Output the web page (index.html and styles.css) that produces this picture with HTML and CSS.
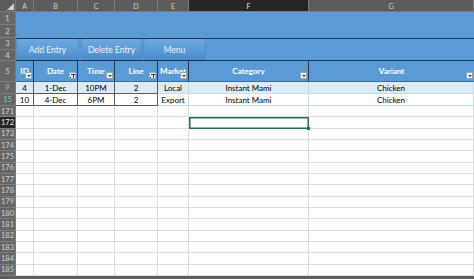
FILE: index.html
```html
<!DOCTYPE html>
<html>
<head>
<meta charset="utf-8">
<link rel="stylesheet" href="styles.css">
</head>
<body>
<div class="sheet">
  <div class="corner"><span class="tri"></span></div>
  <div class="ch">A</div><div class="ch">B</div><div class="ch">C</div><div class="ch">D</div><div class="ch">E</div><div class="ch ch-sel">F</div><div class="ch">G</div>

  <div class="rh">1</div>
  <div class="banner"></div>
  <div class="rh">2</div>
  <div class="rh">3</div>
  <div class="band">
    <div class="btn btn-add">Add Entry</div>
    <div class="btn btn-del">Delete Entry</div>
    <div class="btn btn-menu">Menu</div>
  </div>
  <div class="rh">4</div>

  <div class="rh">5</div>
  <div class="th">ID<span class="fb dd"></span></div>
  <div class="th">Date<span class="fb ft"></span></div>
  <div class="th">Time<span class="fb dd"></span></div>
  <div class="th">Line<span class="fb ft"></span></div>
  <div class="th">Market<span class="fb dd"></span></div>
  <div class="th">Category<span class="fb dd"></span></div>
  <div class="th th-last">Variant<span class="fb dd"></span></div>

  <div class="rh rh-f">9</div>
  <div class="td tb alt">4</div><div class="td tb alt">1-Dec</div><div class="td tb alt">10PM</div><div class="td tb alt">2</div>
  <div class="td tl alt">Local</div><div class="td tl alt">Instant Mami</div><div class="td tl alt">Chicken</div>

  <div class="rh rh-f">15</div>
  <div class="td tb">10</div><div class="td tb">4-Dec</div><div class="td tb">6PM</div><div class="td tb">2</div>
  <div class="td tl">Export</div><div class="td tl">Instant Mami</div><div class="td tl">Chicken</div>

  <div class="rh">171</div><div class="c"></div><div class="c"></div><div class="c"></div><div class="c"></div><div class="c"></div><div class="c"></div><div class="c"></div>
  <div class="rh rh-sel">172</div><div class="c"></div><div class="c"></div><div class="c"></div><div class="c"></div><div class="c"></div><div class="c c-sel"></div><div class="c"></div>
  <div class="rh">173</div><div class="c"></div><div class="c"></div><div class="c"></div><div class="c"></div><div class="c"></div><div class="c"></div><div class="c"></div>
  <div class="rh">174</div><div class="c"></div><div class="c"></div><div class="c"></div><div class="c"></div><div class="c"></div><div class="c"></div><div class="c"></div>
  <div class="rh">175</div><div class="c"></div><div class="c"></div><div class="c"></div><div class="c"></div><div class="c"></div><div class="c"></div><div class="c"></div>
  <div class="rh">176</div><div class="c"></div><div class="c"></div><div class="c"></div><div class="c"></div><div class="c"></div><div class="c"></div><div class="c"></div>
  <div class="rh">177</div><div class="c"></div><div class="c"></div><div class="c"></div><div class="c"></div><div class="c"></div><div class="c"></div><div class="c"></div>
  <div class="rh">178</div><div class="c"></div><div class="c"></div><div class="c"></div><div class="c"></div><div class="c"></div><div class="c"></div><div class="c"></div>
  <div class="rh">179</div><div class="c"></div><div class="c"></div><div class="c"></div><div class="c"></div><div class="c"></div><div class="c"></div><div class="c"></div>
  <div class="rh">180</div><div class="c"></div><div class="c"></div><div class="c"></div><div class="c"></div><div class="c"></div><div class="c"></div><div class="c"></div>
  <div class="rh">181</div><div class="c"></div><div class="c"></div><div class="c"></div><div class="c"></div><div class="c"></div><div class="c"></div><div class="c"></div>
  <div class="rh">182</div><div class="c"></div><div class="c"></div><div class="c"></div><div class="c"></div><div class="c"></div><div class="c"></div><div class="c"></div>
  <div class="rh">183</div><div class="c"></div><div class="c"></div><div class="c"></div><div class="c"></div><div class="c"></div><div class="c"></div><div class="c"></div>
  <div class="rh">184</div><div class="c"></div><div class="c"></div><div class="c"></div><div class="c"></div><div class="c"></div><div class="c"></div><div class="c"></div>
  <div class="rh">185</div><div class="c"></div><div class="c"></div><div class="c"></div><div class="c"></div><div class="c"></div><div class="c"></div><div class="c"></div>

  <div class="bottom"></div>
</div>
</body>
</html>
```
FILE: styles.css
```css
html, body {
  margin: 0;
  padding: 0;
  background: #ffffff;
}
.sheet {
  width: 474px;
  height: 279px;
  overflow: hidden;
  display: grid;
  grid-template-columns: 16px 18px 44px 37px 43px 31px 120px 165px;
  grid-template-rows: 12px 13px 13px 12px 11px 21px 12px 12px repeat(15, 11.333px) 3px;
  font-family: Lato, "Liberation Sans", sans-serif;
  font-size: 8px;
  color: #000;
}
.corner {
  background: #5c5c5c;
  border-right: 1px solid #7a7a7a;
  border-bottom: 1px solid #7a7a7a;
  position: relative;
}
.tri {
  position: absolute;
  right: 1px;
  bottom: 1px;
  width: 0;
  height: 0;
  border-left: 7px solid transparent;
  border-bottom: 7px solid #d0d0d0;
}
.ch {
  background: #5c5c5c;
  color: #cfcfcf;
  font-size: 7px;
  display: flex;
  align-items: center;
  justify-content: center;
  border-right: 1px solid #7c7c7c;
  border-bottom: 1px solid #7a7a7a;
}
.ch-sel {
  background: #262626;
  color: #e6e6e6;
}
.rh {
  grid-column: 1;
  background: #666666;
  color: #d2d2d2;
  font-size: 7.5px;
  display: flex;
  align-items: center;
  justify-content: center;
  border-bottom: 1px solid #7e7e7e;
  border-right: 1px solid #7a7a7a;
  box-sizing: border-box;
}
.rh-f {
  color: #86c8b0;
}
.rh-sel {
  background: #262626;
  color: #e8e8e8;
}
.banner {
  grid-column: 2 / -1;
  grid-row: 2 / 4;
  background: #5b9bd5;
}
.band {
  grid-column: 2 / -1;
  grid-row: 4 / 6;
  background: #5b9bd5;
  border-top: 1px solid #1d3a5c;
  border-bottom: 1px solid #1d3a5c;
  display: flex;
  align-items: center;
  padding-left: 1px;
  gap: 4px;
}
.btn {
  height: 21px;
  border-radius: 4px;
  background: linear-gradient(#6eaae0, #4d8bca);
  box-shadow: 0 1px 1.5px rgba(20, 40, 70, 0.55);
  color: #eef5fc;
  font-size: 8.5px;
  display: flex;
  align-items: center;
  justify-content: center;
}
.btn-add { width: 61px; }
.btn-del { width: 59px; }
.btn-menu { width: 61px; margin-left: -1px; }
.th {
  background: #5b9bd5;
  color: #ffffff;
  font-weight: bold;
  font-size: 8px;
  display: flex;
  align-items: center;
  justify-content: center;
  border-right: 1px solid #1f3b5e;
  border-bottom: 1px solid #3d6f9e;
  position: relative;
  overflow: hidden;
  white-space: nowrap;
}
.th-last {
  border-right: none;
}
.fb {
  position: absolute;
  right: 1px;
  bottom: 2px;
  width: 7px;
  height: 7px;
  background: #f2f2f2;
  border: 1px solid #9aa9b8;
  box-sizing: border-box;
}
.dd::after {
  content: "";
  position: absolute;
  left: 1px;
  top: 2px;
  border-left: 2px solid transparent;
  border-right: 2px solid transparent;
  border-top: 2px solid #404040;
}
.ft::before {
  content: "";
  position: absolute;
  left: 0px;
  bottom: 0px;
  width: 1px;
  height: 1px;
  background: #303030;
}
.ft::after {
  content: "";
  position: absolute;
  left: 1px;
  top: 1px;
  width: 4px;
  height: 4px;
  border-top: 1px solid #303030;
  box-sizing: border-box;
  background: linear-gradient(#303030, #303030) center / 1px 100% no-repeat;
}
.td {
  display: flex;
  align-items: center;
  justify-content: center;
  white-space: nowrap;
  box-sizing: border-box;
}
.tb {
  border-right: 1px solid #5a5a5a;
  border-bottom: 1px solid #5a5a5a;
}
.tb:first-of-type { }
.tl {
  border-right: 1px solid #c9dcee;
  border-bottom: 1px solid #c9dcee;
}
.alt {
  background: #ddebf7;
}
.c {
  border-right: 1px solid #dcdcdc;
  border-bottom: 1px solid #dcdcdc;
  box-sizing: border-box;
}
.c-sel {
  position: relative;
  border: none;
  box-shadow: inset 0 0 0 1.5px #217346;
}
.c-sel::after {
  content: "";
  position: absolute;
  right: -1px;
  bottom: -1px;
  width: 3px;
  height: 3px;
  background: #217346;
}
.bottom {
  grid-column: 1 / -1;
  background: #5e5e5e;
}
```
